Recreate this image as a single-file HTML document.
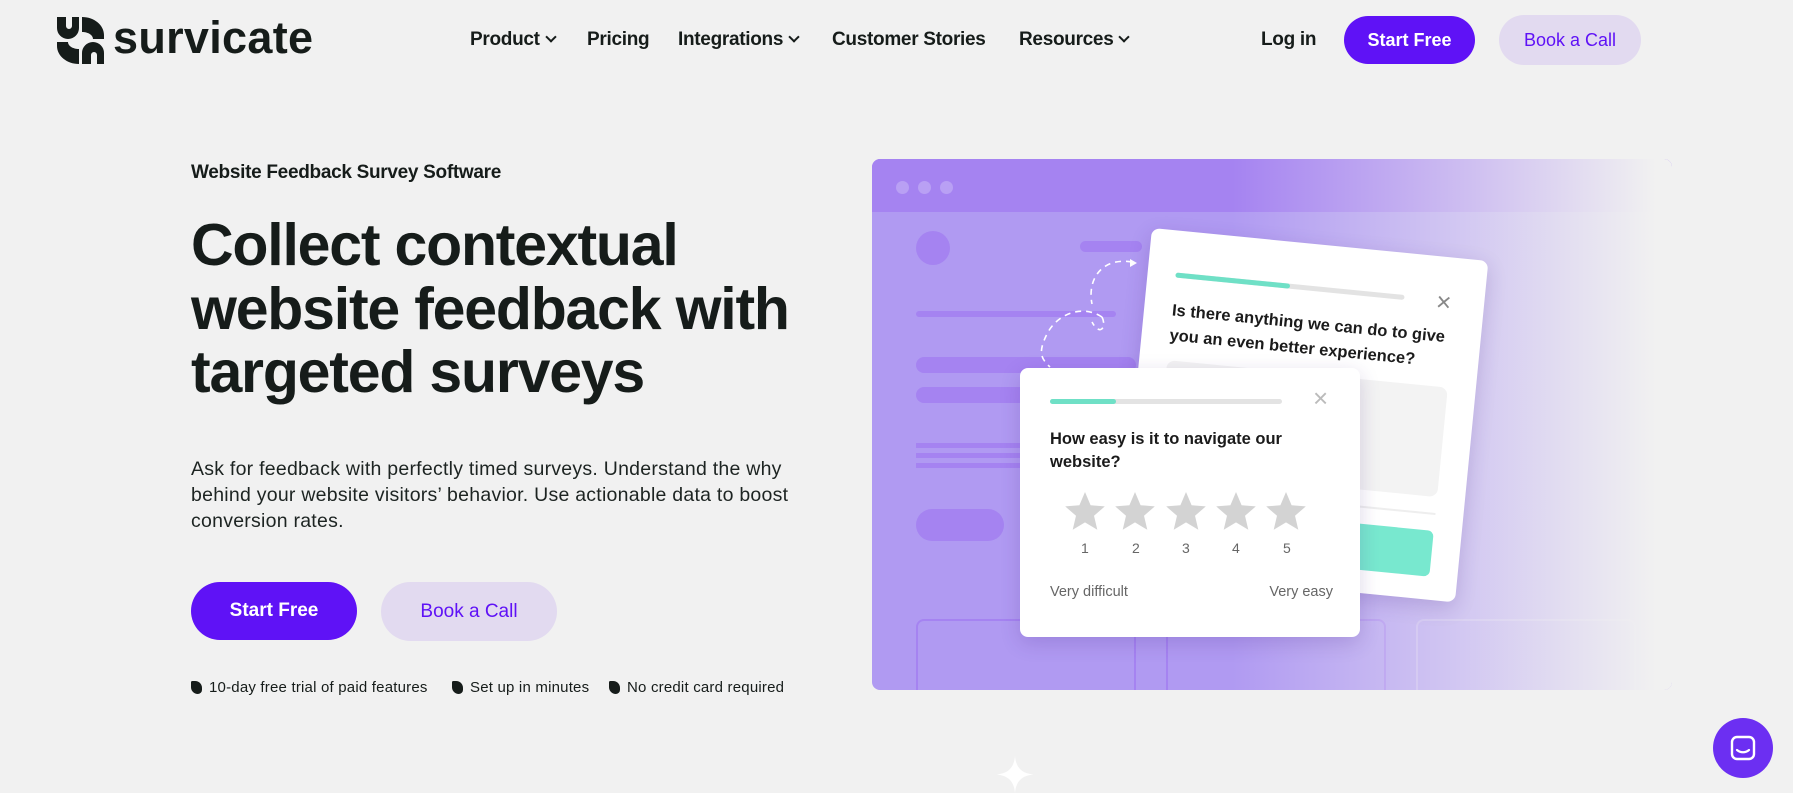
<!DOCTYPE html>
<html><head><meta charset="utf-8"><style>
*{margin:0;padding:0;box-sizing:border-box}
body{width:1793px;height:793px;overflow:hidden;background:#f1f1f1;font-family:"Liberation Sans",sans-serif;color:#161c1a;position:relative}
.abs{position:absolute}
.nav{font-size:19px;font-weight:bold;top:29px;letter-spacing:-0.3px;white-space:nowrap}
.chev{display:inline-block;width:8px;height:8px;border-right:2px solid #161c1a;border-bottom:2px solid #161c1a;transform:rotate(45deg);margin-left:7px;position:relative;top:-4px}
.btn{position:absolute;border-radius:30px;display:flex;align-items:center;justify-content:center;white-space:nowrap}
.h1{left:191px;top:214px;font-size:59px;font-weight:bold;line-height:63.5px;letter-spacing:-1.2px}
.p{left:191px;top:456px;font-size:19.5px;line-height:26px;color:#1d2422;white-space:nowrap;letter-spacing:0.25px}
.chk{top:679px;font-size:15px;white-space:nowrap;letter-spacing:0.2px}
.leaf{display:inline-block;width:11px;height:13px;background:#161c1a;border-radius:2px 10px 6px 10px;margin-right:7px;vertical-align:-2px}
.card{position:absolute;background:#fff;border-radius:8px;box-shadow:0 6px 20px rgba(60,30,120,.18)}
</style></head><body>
<svg class="abs" style="left:57px;top:17px" width="47" height="47" viewBox="0 0 47 47" fill="#161c1a">
<path d="M0 0h9v9a3 3 0 0 0 6 0V0h7v11A11 11 0 0 1 0 11z"/>
<path d="M25 22V0c12 0 22 8 22 18v4H36c0-4-5-7-11-7z"/>
<path d="M0 25h11c0 4 5 7 11 7v15C10 47 0 39 0 29z"/>
<path d="M25 47V36a11 11 0 0 1 22 0v11h-7v-9a3 3 0 0 0-6 0v9z"/>
</svg>
<div class="abs" style="left:113px;top:12px;font-size:45px;font-weight:bold;letter-spacing:0.3px">survicate</div>
<div class="abs nav" style="left:470px">Product<span class="chev"></span></div>
<div class="abs nav" style="left:587px">Pricing</div>
<div class="abs nav" style="left:678px">Integrations<span class="chev"></span></div>
<div class="abs nav" style="left:832px">Customer Stories</div>
<div class="abs nav" style="left:1019px">Resources<span class="chev"></span></div>
<div class="abs nav" style="left:1261px">Log in</div>
<div class="btn" style="left:1344px;top:16px;width:131px;height:48px;background:#5f12f6;color:#fff;font-weight:bold;font-size:18px">Start Free</div>
<div class="btn" style="left:1499px;top:15px;width:142px;height:50px;background:#e2daf0;color:#5f12f6;font-size:18px">Book a Call</div>

<div class="abs" style="left:191px;top:162px;font-size:19px;font-weight:bold;letter-spacing:-0.3px">Website Feedback Survey Software</div>
<div class="abs h1">Collect contextual<br>website feedback with<br>targeted surveys</div>
<div class="abs p">Ask for feedback with perfectly timed surveys. Understand the why<br>behind your website visitors’ behavior. Use actionable data to boost<br>conversion rates.</div>
<div class="btn" style="left:191px;top:582px;width:166px;height:58px;background:#5f12f6;color:#fff;font-weight:bold;font-size:19px">Start Free</div>
<div class="btn" style="left:381px;top:582px;width:176px;height:59px;background:#e2daf0;color:#5f12f6;font-size:19px">Book a Call</div>
<div class="abs chk" style="left:191px"><span class="leaf"></span>10-day free trial of paid features</div>
<div class="abs chk" style="left:452px"><span class="leaf"></span>Set up in minutes</div>
<div class="abs chk" style="left:609px"><span class="leaf"></span>No credit card required</div>

<div class="abs" style="left:872px;top:159px;width:800px;height:531px;border-radius:8px;overflow:hidden;background:#b09af2">
 <div class="abs" style="left:0;top:0;width:100%;height:53px;background:#a583f1"></div>
 <div class="abs" style="left:24px;top:22px;width:13px;height:13px;border-radius:50%;background:#b9a0f4"></div>
 <div class="abs" style="left:46px;top:22px;width:13px;height:13px;border-radius:50%;background:#b9a0f4"></div>
 <div class="abs" style="left:68px;top:22px;width:13px;height:13px;border-radius:50%;background:#b9a0f4"></div>
 <div class="abs" style="left:44px;top:72px;width:34px;height:34px;border-radius:50%;background:#a583f1"></div>
 <div class="abs" style="left:208px;top:82px;width:62px;height:11px;border-radius:6px;background:#a583f1"></div>
 <div class="abs" style="left:44px;top:152px;width:200px;height:6px;border-radius:3px;background:#a583f1"></div>
 <div class="abs" style="left:44px;top:198px;width:220px;height:16px;border-radius:8px;background:#a583f1"></div>
 <div class="abs" style="left:44px;top:228px;width:220px;height:16px;border-radius:8px;background:#a583f1"></div>
 <div class="abs" style="left:44px;top:284px;width:120px;height:5px;background:#a583f1"></div>
 <div class="abs" style="left:44px;top:294px;width:120px;height:5px;background:#a583f1"></div>
 <div class="abs" style="left:44px;top:304px;width:120px;height:5px;background:#a583f1"></div>
 <div class="abs" style="left:44px;top:350px;width:88px;height:32px;border-radius:16px;background:#a583f1"></div>
 <div class="abs" style="left:44px;top:460px;width:220px;height:100px;border:2px solid #a583f1;border-radius:8px"></div>
 <div class="abs" style="left:294px;top:460px;width:220px;height:100px;border:2px solid #a583f1;border-radius:8px"></div>
 <div class="abs" style="left:544px;top:460px;width:220px;height:100px;border:2px solid #c0aef2;border-radius:8px"></div>
 <svg class="abs" style="left:160px;top:100px" width="110" height="110"><path d="M100 3C70-2 55 20 60 45M70 58C50 45 25 55 15 75S10 100 18 108M70 58c5 10-2 20-10 5" fill="none" stroke="#fff" stroke-width="1.6" stroke-dasharray="6 5"/><path d="M98 0l7 4-7 4z" fill="#fff"/></svg>
 <div class="abs" style="left:0;top:0;width:100%;height:100%;background:linear-gradient(90deg,rgba(241,241,241,0) 45%,rgba(241,241,241,.55) 75%,#f1f1f1 98%)"></div>
</div>
<div class="card" style="left:1152px;top:228px;width:338px;height:343px;transform:rotate(5.6deg);transform-origin:0 0">
 <div class="abs" style="left:28px;top:42px;width:230px;height:5px;border-radius:3px;background:#e3e3e3"></div>
 <div class="abs" style="left:28px;top:42px;width:115px;height:5px;border-radius:3px;background:#6fe0c6"></div>
 <div class="abs" style="left:290px;top:30px;font-size:26px;color:#888;font-weight:300">×</div>
 <div class="abs" style="left:28px;top:68px;width:280px;font-size:16.5px;font-weight:bold;line-height:25px;color:#1b1b1b">Is there anything we can do to give you an even better experience?</div>
 <div class="abs" style="left:28px;top:130px;width:282px;height:110px;border-radius:8px;background:#f3f3f3"></div>
 <div class="abs" style="left:28px;top:256px;width:282px;height:2px;background:#eee"></div>
 <div class="abs" style="left:28px;top:274px;width:282px;height:46px;border-radius:6px;background:#78e8cf"></div>
</div>
<div class="card" style="left:1020px;top:368px;width:340px;height:269px">
 <div class="abs" style="left:30px;top:31px;width:232px;height:5px;border-radius:3px;background:#e3e3e3"></div>
 <div class="abs" style="left:30px;top:31px;width:66px;height:5px;border-radius:3px;background:#6fe0c6"></div>
 <div class="abs" style="left:293px;top:15px;font-size:26px;color:#bbb">×</div>
 <div class="abs" style="left:30px;top:60px;width:260px;font-size:16.5px;font-weight:bold;line-height:23px;color:#1b1b1b">How easy is it to navigate our website?</div>
 <svg class="abs" style="left:45px;top:123px" width="250" height="42" viewBox="0 0 250 42">
  <g fill="#d3d3d3">
  <path id="s" d="M20 1l5.6 13.2 14.2 1.2-10.8 9.4 3.3 14L20 31.4 7.7 38.8l3.3-14L.2 15.4l14.2-1.2z"/>
  <use href="#s" x="50"/><use href="#s" x="101"/><use href="#s" x="151"/><use href="#s" x="201"/>
  </g></svg>
 <div class="abs" style="top:172px;left:0;width:340px;font-size:14px;color:#666">
  <span class="abs" style="left:61px">1</span><span class="abs" style="left:112px">2</span><span class="abs" style="left:162px">3</span><span class="abs" style="left:212px">4</span><span class="abs" style="left:263px">5</span></div>
 <div class="abs" style="left:30px;top:216px;font-size:14.5px;color:#666">Very difficult</div>
 <div class="abs" style="right:27px;top:216px;font-size:14.5px;color:#666">Very easy</div>
</div>

<div class="abs" style="left:1713px;top:718px;width:60px;height:60px;border-radius:50%;background:#6c2ff2">
 <svg class="abs" style="left:17px;top:17px" width="26" height="26" viewBox="0 0 26 26"><rect x="2" y="2" width="22" height="22" rx="5" fill="none" stroke="#fff" stroke-width="2.4"/><path d="M7 15c3.5 3 8.5 3 12 0" fill="none" stroke="#fff" stroke-width="2.2" stroke-linecap="round"/></svg>
</div>
<svg class="abs" style="left:996px;top:756px" width="38" height="37" viewBox="0 0 38 38"><path d="M19 0C20 12 26 18 38 19 26 20 20 26 19 38 18 26 12 20 0 19 12 18 18 12 19 0z" fill="#fff"/></svg>
</body></html>
